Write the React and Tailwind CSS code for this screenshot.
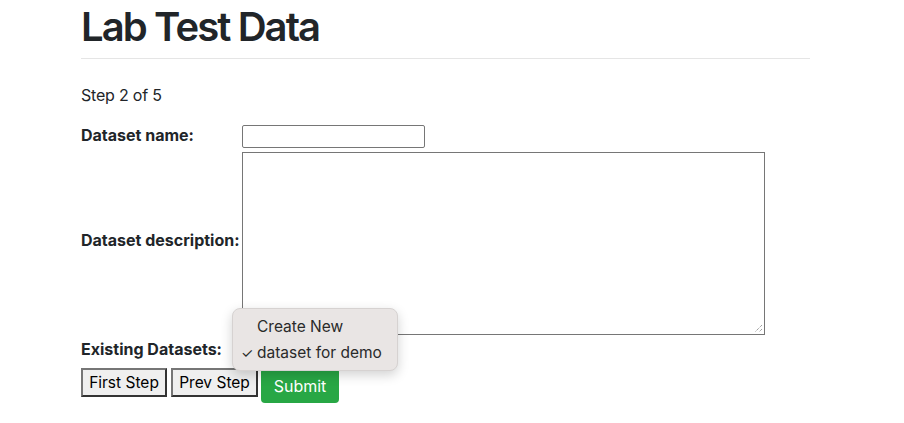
import React from "react";

export default function App() {
  const font = { fontFamily: "Inter, 'Liberation Sans', sans-serif" };
  const btn =
    "h-[29px] text-[15.5px] bg-[#efefef] border-2 border-t-[#767676] border-l-[#767676] border-b-[#333] border-r-[#333] text-black";
  return (
    <div className="min-h-[423px] bg-white text-[#212529]" style={font}>
      <div className="ml-[81px] w-[729px]">
        <h1 className="text-[40px] font-semibold tracking-[-1.9px] leading-[48px] m-0 pt-[3px] pb-[6px]">Lab Test Data</h1>
        <div className="mt-[1px] h-px bg-[#e5e5e5]" />
        <p className="mt-[24px] text-[16px] leading-[24px] tracking-[-0.2px]">Step 2 of 5</p>
        <div className="relative mt-[18px]">
          <div className="grid grid-cols-[161px_auto] items-center">
            <div className="text-[16px] font-bold leading-[20px] pb-[6px] self-start">Dataset name:</div>
            <div className="pb-[4px]">
              <div className="w-[183px] h-[23px] border border-[#767676] rounded-[2px] bg-white" />
            </div>
            <div className="text-[16px] font-bold leading-[20px] pb-[8px]">Dataset description:</div>
            <div>
              <div className="relative w-[523px] h-[183px] border border-[#767676] bg-white">
                <svg className="absolute right-[1px] bottom-[1px]" width="9" height="9" viewBox="0 0 9 9">
                  <path d="M8 1 L1 8 M8 5 L5 8" stroke="#777" strokeWidth="1" strokeDasharray="1 1" />
                </svg>
              </div>
            </div>
            <div className="text-[16px] font-bold leading-[20px] pt-[2px] pb-[4px]">Existing Datasets:</div>
            <div className="h-[30px]" />
          </div>
          <div className="flex items-start mt-[3px]">
            <button className={btn + " w-[86px]"}>First Step</button>
            <button className={btn + " w-[87px] ml-[4px]"}>Prev Step</button>
            <button className="h-[35px] w-[78px] ml-[3px] text-[16px] bg-[#28a745] text-white rounded-[4px]">Submit</button>
          </div>
          <div className="absolute left-[151px] top-[183px] w-[166px] h-[63px] rounded-[8px] bg-[#e9e5e4] border border-[#d6d2d1] shadow-[0_4px_12px_rgba(0,0,0,0.18)] text-[15.5px] text-[#2a2a2a]">
            <div className="pl-[24px] pt-[6px] leading-[24px]">Create New</div>
            <div className="relative pl-[24px] pt-[1px] leading-[26px]">
              <span className="absolute left-[8px] top-[1px] text-[14px]">✓</span>
              dataset for demo
            </div>
          </div>
        </div>
      </div>
    </div>
  );
}
